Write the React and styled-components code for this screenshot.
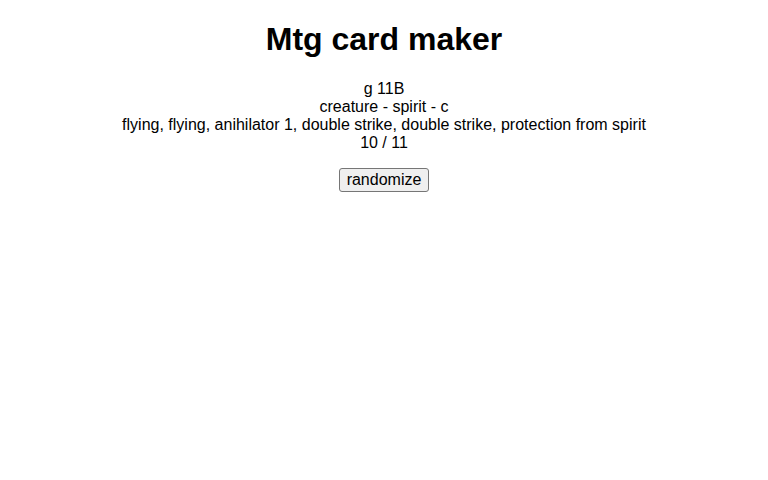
import React from "react";
import styled, { createGlobalStyle } from "styled-components";

const Global = createGlobalStyle`
  html, body { margin: 0; padding: 0; background: #fff; }
  body { font-family: "Liberation Sans", Arial, sans-serif; color: #000; }
`;

const Page = styled.div`
  text-align: center;
`;

const Title = styled.h1`
  font-size: 32px;
  font-weight: bold;
  margin: 21.44px 0;
`;

const Card = styled.div`
  font-size: 16px;
  line-height: 18px;
`;

const Line = styled.div``;

const Actions = styled.div`
  margin-top: 15px;
`;

const Button = styled.button`
  font-family: "Liberation Sans", Arial, sans-serif;
  font-size: 16px;
  color: #000;
  background: #efefef;
  border: 1px solid #767676;
  border-radius: 3px;
  padding: 1px 7px;
  height: 24px;
  line-height: 20px;
  margin-top: 1px;
`;

export default function App() {
  return (
    <Page>
      <Global />
      <Title>Mtg card maker</Title>
      <Card>
        <Line>g 11B</Line>
        <Line>creature - spirit - c</Line>
        <Line>flying, flying, anihilator 1, double strike, double strike, protection from spirit</Line>
        <Line>10 / 11</Line>
      </Card>
      <Actions>
        <Button>randomize</Button>
      </Actions>
    </Page>
  );
}
